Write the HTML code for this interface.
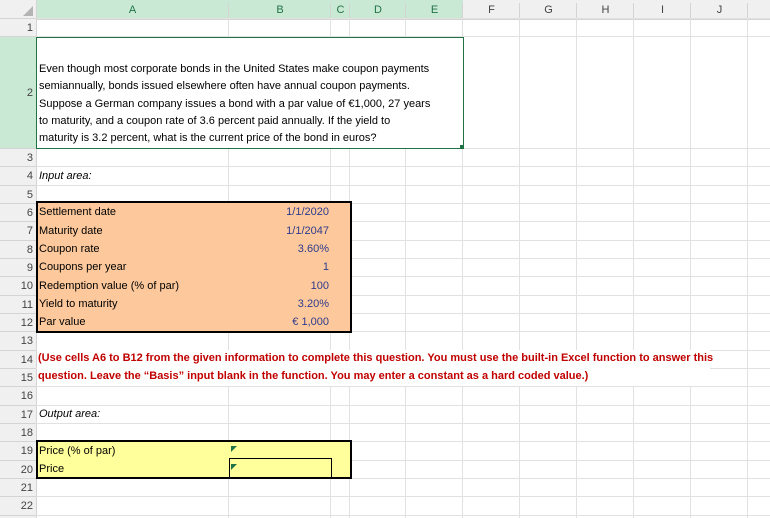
<!DOCTYPE html>
<html><head><meta charset="utf-8">
<style>
body{margin:0;width:770px;height:518px;overflow:hidden;background:#fff;font-family:"Liberation Sans",sans-serif;position:relative}
.a{position:absolute}
.t{position:absolute;font-size:11px;color:#000;white-space:nowrap;line-height:18px}
.rn{position:absolute;left:0;width:33px;text-align:right;font-size:11px;color:#444;line-height:18px}
.ch{position:absolute;top:0;height:19px;line-height:20px;text-align:center;font-size:11px;color:#444}
</style></head><body>
<div class="a" style="left:0;top:0;width:770px;height:19px;background:#f0f0f0;border-bottom:1px solid #d4d4d4"></div>
<div class="a" style="left:36px;top:0;width:427px;height:18px;background:#c9e9d5;border-bottom:1px solid #217346"></div>
<div class="a" style="left:0;top:0;width:36px;height:518px;background:#f0f0f0;border-right:1px solid #d4d4d4"></div>
<div class="a" style="left:0;top:37px;width:36px;height:112px;background:#c9e9d5;border-right:1px solid #217346"></div>
<svg class="a" style="left:22px;top:5px" width="12" height="12"><polygon points="11,1 11,11 1,11" fill="#b4b4b4"/></svg>
<div id="g"></div>
<div class="a" style="left:36px;top:37px;width:426px;height:110px;border:1px solid #217346;background:#fff"></div>
<div class="a" style="left:460px;top:145px;width:4px;height:4px;background:#217346"></div>
<div class="a" style="left:39px;top:61px;font-size:11px;line-height:17.3px;white-space:nowrap">Even though most corporate bonds in the United States make coupon payments<br>semiannually, bonds issued elsewhere often have annual coupon payments.<br>Suppose a German company issues a bond with a par value of €1,000, 27 years<br>to maturity, and a coupon rate of 3.6 percent paid annually. If the yield to<br>maturity is 3.2 percent, what is the current price of the bond in euros?</div>
<div class="a" style="left:36px;top:201px;width:312px;height:128px;background:#fdc99c;border:2px solid #000"></div>
<div class="a" style="left:36px;top:440px;width:312px;height:35px;background:#ffff9c;border:2px solid #000"></div>
<div class="a" style="left:229px;top:458px;width:101px;height:18px;border:1px solid #000"></div>
<svg class="a" style="left:231px;top:446px" width="6" height="6"><polygon points="0,0 6,0 0,6" fill="#217346"/></svg>
<svg class="a" style="left:231px;top:464px" width="6" height="6"><polygon points="0,0 6,0 0,6" fill="#217346"/></svg>
<div class="a" style="left:37px;top:350px;width:673px;height:36px;background:#fff"></div>
<div class="t" style="left:38px;top:349px;color:#c00000;font-weight:bold;font-size:11px;letter-spacing:0">(Use cells A6 to B12 from the given information to complete this question. You must use the built-in Excel function to answer this</div>
<div class="t" style="left:38px;top:367px;color:#c00000;font-weight:bold;font-size:11px;letter-spacing:0">question. Leave the “Basis” input blank in the function. You may enter a constant as a hard coded value.)</div>
<div id="x"></div>
<script>
var cols=[36,229,331,350,406,463,520,577,634,691,748,805];
var names="ABCDEFGHIJK";
var h='';
for(var i=0;i<11;i++){var l=cols[i],w=cols[i+1]-l;
h+='<div class="ch" style="left:'+l+'px;width:'+w+'px;'+(i<5?'color:#217346;':'')+'">'+names[i]+'</div>';
h+='<div class="a" style="left:'+(cols[i+1]-1)+'px;top:3px;width:1px;height:16px;background:#d4d4d4"></div>';
h+='<div class="a" style="left:'+(cols[i+1]-1)+'px;top:19px;width:1px;height:499px;background:#e1e1e1"></div>';}
function rt(n){return n==1?19:n==2?37:149+(n-3)*18.33;}
for(var n=1;n<=23;n++){var t=rt(n);
h+='<div class="a" style="left:36px;top:'+(t-1)+'px;width:734px;height:1px;background:#e1e1e1"></div>';
h+='<div class="a" style="left:0;top:'+(t-1)+'px;width:36px;height:1px;background:#d4d4d4"></div>';}
for(var n=1;n<=22;n++){var t=rt(n),hh=rt(n+1)-t;
h+='<div class="rn" style="top:'+(t+(hh-18)/2)+'px">'+n+'</div>';}
document.getElementById('g').innerHTML=h;
var lab=[[6,'Settlement date','1/1/2020'],[7,'Maturity date','1/1/2047'],[8,'Coupon rate','3.60%'],[9,'Coupons per year','1'],[10,'Redemption value (% of par)','100'],[11,'Yield to maturity','3.20%'],[12,'Par value','€ 1,000'],[19,'Price (% of par)',''],[20,'Price','']];
var s='';
for(var k=0;k<lab.length;k++){var t=rt(lab[k][0])-0.5;
s+='<div class="t" style="left:39px;top:'+t+'px">'+lab[k][1]+'</div>';
if(lab[k][2])s+='<div class="t" style="left:229px;width:100px;text-align:right;color:#2f3a8c;top:'+t+'px">'+lab[k][2]+'</div>';}
s+='<div class="t" style="left:39px;font-style:italic;top:'+(rt(4)-0.5)+'px">Input area:</div>';
s+='<div class="t" style="left:39px;font-style:italic;top:'+(rt(17)-0.5)+'px">Output area:</div>';
document.getElementById('x').innerHTML=s;
</script>
</body></html>
